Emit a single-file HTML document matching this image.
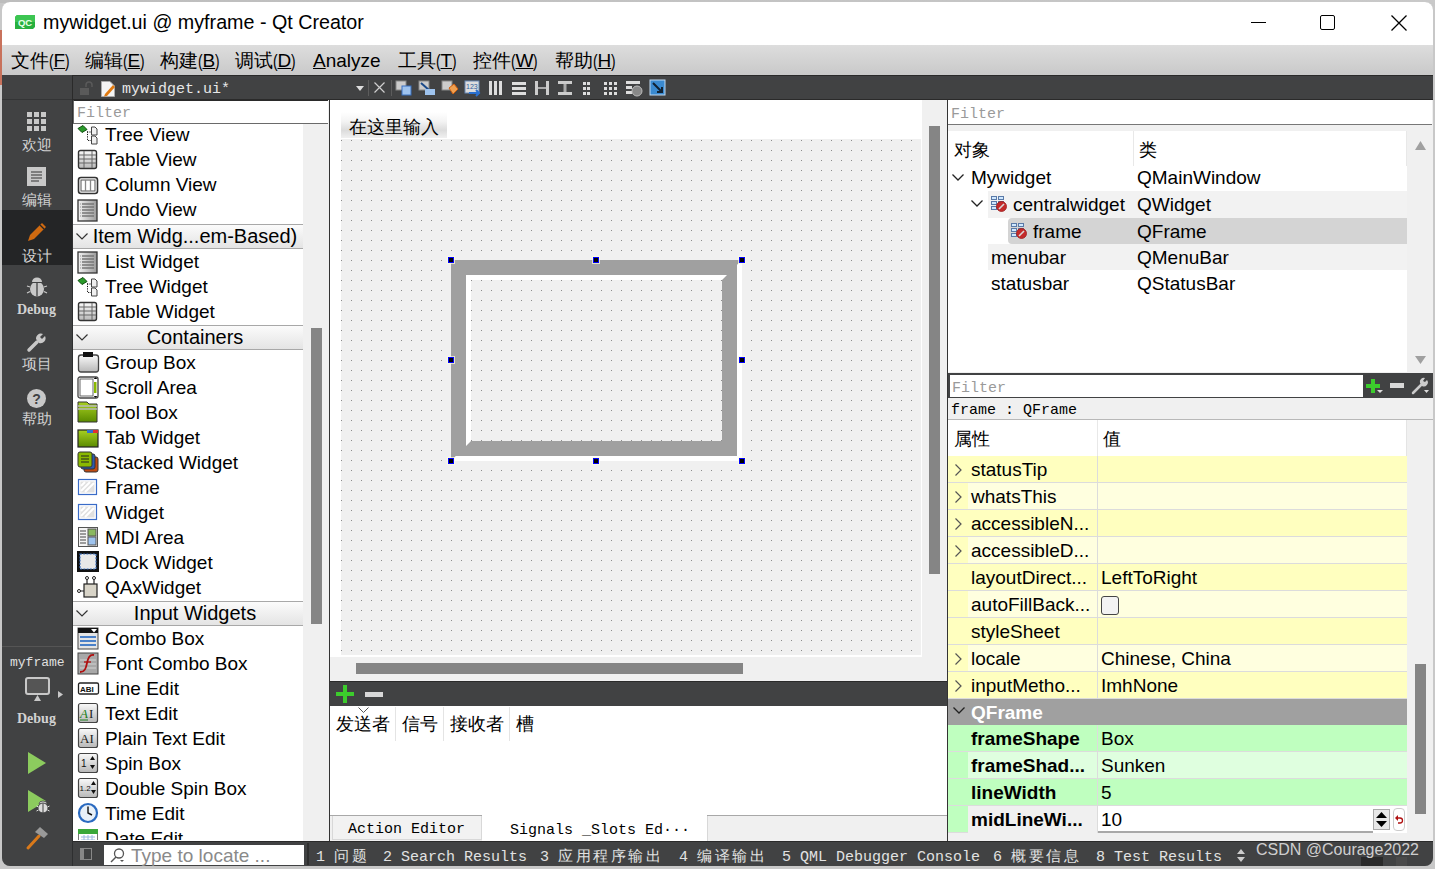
<!DOCTYPE html>
<html><head><meta charset="utf-8">
<style>
*{box-sizing:border-box;margin:0;padding:0}
html,body{width:1435px;height:869px;overflow:hidden;background:#c4c4c4;font-family:"Liberation Sans",sans-serif;color:#000}
.a{position:absolute}
svg.a{overflow:visible}
.t{position:absolute;white-space:nowrap;line-height:1}
.mono{font-family:"Liberation Mono",monospace}
.serif{font-family:"Liberation Serif",serif}
</style></head><body>

<div class="a" style="left:0px;top:0px;width:1435px;height:869px;background:#c8c8c8;"></div>
<div class="a" style="left:0px;top:0px;width:1435px;height:3px;background:linear-gradient(90deg,#bdbdbd,#c9c9c9);"></div>
<div class="a" style="left:0px;top:30px;width:3px;height:55px;background:#c8725c;"></div>
<div class="a" style="left:2px;top:2px;width:1431px;height:864px;background:#414243;border-radius:8px;border:1px solid #a8a8a8"></div>
<div class="a" style="left:2px;top:2px;width:1431px;height:43px;background:#fff;border-radius:8px 8px 0 0"></div>
<svg class="a" style="left:15px;top:15px;" width="20" height="14" viewBox="0 0 20 14"><path d="M2 0 H20 V12 L18 14 H0 V2 Z" fill="#27b03e"/><path d="M2 0 H20 V7 H0 V2 Z" fill="#3cc552"/><text x="10" y="11" font-family="Liberation Sans" font-weight="bold" font-size="9.5" fill="#e8ffe8" text-anchor="middle">QC</text></svg>
<div class="t" style="left:43px;top:13.02px;font-size:19.7px;color:#000;">mywidget.ui @ myframe - Qt Creator</div>
<div class="a" style="left:1251px;top:22px;width:15px;height:1px;background:#000;"></div>
<div class="a" style="left:1320px;top:15px;width:15px;height:15px;border:1.3px solid #000;border-radius:2px"></div>
<svg class="a" style="left:1391px;top:15px;" width="16" height="16" viewBox="0 0 16 16"><path d="M0.5 0.5 L15.5 15.5 M15.5 0.5 L0.5 15.5" stroke="#000" stroke-width="1.3"/></svg>
<div class="a" style="left:2px;top:45px;width:1431px;height:30px;background:linear-gradient(#dddddd,#c9c9c9);"></div>
<div class="t" style="left:11px;top:50.92px;font-size:19px;color:#000;">文件<span style="display:inline-block;transform:scaleX(0.72);transform-origin:left;margin-right:-1.8px">(</span><u>F</u><span style="display:inline-block;transform:scaleX(0.72);transform-origin:left;margin-right:-1.8px">)</span></div>
<div class="t" style="left:85px;top:50.92px;font-size:19px;color:#000;">编辑<span style="display:inline-block;transform:scaleX(0.72);transform-origin:left;margin-right:-1.8px">(</span><u>E</u><span style="display:inline-block;transform:scaleX(0.72);transform-origin:left;margin-right:-1.8px">)</span></div>
<div class="t" style="left:160px;top:50.92px;font-size:19px;color:#000;">构建<span style="display:inline-block;transform:scaleX(0.72);transform-origin:left;margin-right:-1.8px">(</span><u>B</u><span style="display:inline-block;transform:scaleX(0.72);transform-origin:left;margin-right:-1.8px">)</span></div>
<div class="t" style="left:235px;top:50.92px;font-size:19px;color:#000;">调试<span style="display:inline-block;transform:scaleX(0.72);transform-origin:left;margin-right:-1.8px">(</span><u>D</u><span style="display:inline-block;transform:scaleX(0.72);transform-origin:left;margin-right:-1.8px">)</span></div>
<div class="t" style="left:313px;top:50.92px;font-size:19px;color:#000;"><u>A</u>nalyze</div>
<div class="t" style="left:398px;top:50.92px;font-size:19px;color:#000;">工具<span style="display:inline-block;transform:scaleX(0.72);transform-origin:left;margin-right:-1.8px">(</span><u>T</u><span style="display:inline-block;transform:scaleX(0.72);transform-origin:left;margin-right:-1.8px">)</span></div>
<div class="t" style="left:473px;top:50.92px;font-size:19px;color:#000;">控件<span style="display:inline-block;transform:scaleX(0.72);transform-origin:left;margin-right:-1.8px">(</span><u>W</u><span style="display:inline-block;transform:scaleX(0.72);transform-origin:left;margin-right:-1.8px">)</span></div>
<div class="t" style="left:555px;top:50.92px;font-size:19px;color:#000;">帮助<span style="display:inline-block;transform:scaleX(0.72);transform-origin:left;margin-right:-1.8px">(</span><u>H</u><span style="display:inline-block;transform:scaleX(0.72);transform-origin:left;margin-right:-1.8px">)</span></div>
<div class="a" style="left:2px;top:75px;width:1431px;height:25px;background:#414243;"></div>
<div class="a" style="left:2px;top:75px;width:1431px;height:1px;background:#2a2a2a;"></div>
<div class="a" style="left:2px;top:99px;width:1431px;height:1px;background:#2a2a2a;"></div>
<div class="a" style="left:2px;top:75px;width:71px;height:791px;background:#414243;border-radius:0 0 0 8px"></div>
<div class="a" style="left:72px;top:75px;width:1px;height:25px;background:#2a2a2a;"></div>
<div class="a" style="left:2px;top:99px;width:70px;height:1px;background:#333435;"></div>
<svg class="a" style="left:80px;top:82px;" width="12" height="13" viewBox="0 0 12 13"><path d="M6 5 V3 A3 3 0 0 1 12 3 V5" stroke="#5a5a5a" stroke-width="1.5" fill="none"/><rect x="0" y="6" width="9" height="7" fill="#5a5a5a"/></svg>
<svg class="a" style="left:101px;top:81px;" width="15" height="16" viewBox="0 0 15 16"><path d="M0.5 0.5 H9 L13.5 5 V15.5 H0.5 Z" fill="#f4f4f4" stroke="#aaa"/><path d="M4 13 L12 4 L14 6 L6 15 L3 15.5 Z" fill="#e07a10"/></svg>
<div class="t mono" style="left:122px;top:82.03px;font-size:15px;color:#e8e8e8;">mywidget.ui*</div>
<svg class="a" style="left:356px;top:86px;" width="8" height="5" viewBox="0 0 8 5"><path d="M0 0 H8 L4 5 Z" fill="#ddd"/></svg>
<div class="a" style="left:368px;top:80px;width:1px;height:16px;background:#5c5c5c;"></div>
<svg class="a" style="left:374px;top:82px;" width="11" height="11" viewBox="0 0 11 11"><path d="M0.5 0.5 L10.5 10.5 M10.5 0.5 L0.5 10.5" stroke="#cfcfcf" stroke-width="1.2"/></svg>
<div class="a" style="left:391px;top:80px;width:1px;height:16px;background:#5c5c5c;"></div>
<svg class="a" style="left:396px;top:80px;" width="16" height="16" viewBox="0 0 16 16"><rect x="0" y="1" width="10" height="9" fill="#ccc" stroke="#888"/><rect x="6" y="6" width="9" height="9" fill="#9ec3ee" stroke="#3a70c0"/></svg>
<svg class="a" style="left:419px;top:80px;" width="16" height="16" viewBox="0 0 16 16"><rect x="0" y="1" width="10" height="9" fill="#ccc" stroke="#888"/><path d="M2 3 L10 10" stroke="#1a4a8a" stroke-width="2"/><rect x="6" y="9" width="10" height="6" fill="#9ec3ee"/></svg>
<svg class="a" style="left:442px;top:80px;" width="16" height="16" viewBox="0 0 16 16"><rect x="0" y="1" width="10" height="9" fill="#ccc" stroke="#888"/><path d="M7 8 L12 4 L16 9 L11 14 Z" fill="#f0a050" stroke="#d06010"/></svg>
<svg class="a" style="left:465px;top:80px;" width="16" height="16" viewBox="0 0 16 16"><rect x="0" y="1" width="14" height="12" fill="#ddd" stroke="#6a8ab8"/><text x="1" y="9" font-size="7" fill="#3060a0" font-family="Liberation Sans">123</text><path d="M4 13 H14 M11 10 L14 13 L11 16" stroke="#2a70d0" stroke-width="2" fill="none"/></svg>
<svg class="a" style="left:489px;top:80px;" width="16" height="16" viewBox="0 0 16 16"><rect x="0" y="1" width="3" height="14" fill="#ddd"/><rect x="5" y="1" width="3" height="14" fill="#ddd"/><rect x="10" y="1" width="3" height="14" fill="#ddd"/></svg>
<svg class="a" style="left:512px;top:80px;" width="16" height="16" viewBox="0 0 16 16"><rect x="0" y="2" width="14" height="3" fill="#ddd"/><rect x="0" y="7" width="14" height="3" fill="#ddd"/><rect x="0" y="12" width="14" height="3" fill="#ddd"/></svg>
<svg class="a" style="left:535px;top:80px;" width="16" height="16" viewBox="0 0 16 16"><rect x="0" y="1" width="3" height="14" fill="#ccc"/><rect x="11" y="1" width="3" height="14" fill="#ccc"/><path d="M3 8 H11" stroke="#aaa" stroke-width="2"/></svg>
<svg class="a" style="left:558px;top:80px;" width="16" height="16" viewBox="0 0 16 16"><rect x="0" y="1" width="14" height="3" fill="#ccc"/><rect x="0" y="12" width="14" height="3" fill="#ccc"/><path d="M7 4 V12" stroke="#aaa" stroke-width="3"/></svg>
<svg class="a" style="left:583px;top:80px;" width="16" height="16" viewBox="0 0 16 16"><rect x="0" y="2" width="3" height="3" fill="#ddd"/><rect x="4" y="2" width="3" height="3" fill="#ddd"/><rect x="0" y="7" width="3" height="3" fill="#ddd"/><rect x="4" y="7" width="3" height="3" fill="#ddd"/><rect x="0" y="12" width="3" height="3" fill="#ddd"/><rect x="4" y="12" width="3" height="3" fill="#ddd"/></svg>
<svg class="a" style="left:604px;top:80px;" width="16" height="16" viewBox="0 0 16 16"><rect x="0" y="2" width="3" height="3" fill="#ddd"/><rect x="0" y="7" width="3" height="3" fill="#ddd"/><rect x="0" y="12" width="3" height="3" fill="#ddd"/><rect x="5" y="2" width="3" height="3" fill="#ddd"/><rect x="5" y="7" width="3" height="3" fill="#ddd"/><rect x="5" y="12" width="3" height="3" fill="#ddd"/><rect x="10" y="2" width="3" height="3" fill="#ddd"/><rect x="10" y="7" width="3" height="3" fill="#ddd"/><rect x="10" y="12" width="3" height="3" fill="#ddd"/></svg>
<svg class="a" style="left:626px;top:80px;" width="16" height="16" viewBox="0 0 16 16"><rect x="0" y="1" width="14" height="3" fill="#ddd"/><rect x="0" y="6" width="6" height="3" fill="#ddd"/><rect x="0" y="11" width="6" height="3" fill="#ddd"/><circle cx="11" cy="11" r="5" fill="#888" stroke="#bbb"/></svg>
<svg class="a" style="left:650px;top:80px;" width="16" height="16" viewBox="0 0 16 16"><rect x="0" y="0" width="15" height="15" fill="#3a8ad0" stroke="#c0d8f0"/><path d="M3 3 L12 12 M12 7 V12 H7" stroke="#123" stroke-width="2" fill="none"/></svg>
<svg class="a" style="left:27px;top:112px;" width="19" height="19" viewBox="0 0 19 19"><rect x="0" y="0" width="5" height="5" fill="#c8c8c8"/><rect x="0" y="7" width="5" height="5" fill="#c8c8c8"/><rect x="0" y="14" width="5" height="5" fill="#c8c8c8"/><rect x="7" y="0" width="5" height="5" fill="#c8c8c8"/><rect x="7" y="7" width="5" height="5" fill="#c8c8c8"/><rect x="7" y="14" width="5" height="5" fill="#c8c8c8"/><rect x="14" y="0" width="5" height="5" fill="#c8c8c8"/><rect x="14" y="7" width="5" height="5" fill="#c8c8c8"/><rect x="14" y="14" width="5" height="5" fill="#c8c8c8"/></svg>
<div class="t" style="left:22px;top:137.30px;font-size:15px;color:#d2d2d2;font-weight:500;">欢迎</div>
<svg class="a" style="left:27px;top:167px;" width="19" height="19" viewBox="0 0 19 19"><rect x="0" y="0" width="19" height="19" fill="#c8c8c8"/><path d="M4 5 H15 M4 8 H15 M4 11 H15 M4 14 H12" stroke="#333" stroke-width="1.2"/></svg>
<div class="t" style="left:22px;top:192.30px;font-size:15px;color:#d2d2d2;font-weight:500;">编辑</div>
<div class="a" style="left:2px;top:210px;width:70px;height:55px;background:#242526;"></div>
<svg class="a" style="left:27px;top:222px;" width="20" height="20" viewBox="0 0 20 20"><path d="M1 19 L3 13 L15 1 L19 5 L7 17 Z" fill="#d06a10"/><path d="M13 3 L17 7" stroke="#242526" stroke-width="1.2"/></svg>
<div class="t" style="left:22px;top:248.30px;font-size:15px;color:#d2d2d2;font-weight:500;">设计</div>
<svg class="a" style="left:27px;top:277px;" width="20" height="20" viewBox="0 0 20 20"><path d="M5 5 A5 4.5 0 0 1 15 5 Z" fill="#c8c8c8"/><ellipse cx="10" cy="12" rx="7" ry="7.5" fill="#c8c8c8"/><path d="M10 5 V19.5" stroke="#414243" stroke-width="1.3"/><path d="M4.5 5.5 H15.5" stroke="#414243" stroke-width="1"/><path d="M0 9 L3 10 M20 9 L17 10 M0 16 L3 14.5 M20 16 L17 14.5" stroke="#c8c8c8" stroke-width="1.3"/></svg>
<div class="t serif" style="left:17px;top:303.27px;font-size:14px;color:#d2d2d2;"><b>Debug</b></div>
<svg class="a" style="left:27px;top:333px;" width="19" height="19" viewBox="0 0 19 19"><path d="M2 17 L10 9" stroke="#c8c8c8" stroke-width="3.5" stroke-linecap="round"/><path d="M9 6 A5 5 0 0 1 16 1 L13 4 L15 6 L18 3 A5 5 0 0 1 12 10 Z" fill="#c8c8c8"/></svg>
<div class="t" style="left:22px;top:356.30px;font-size:15px;color:#d2d2d2;font-weight:500;">项目</div>
<svg class="a" style="left:27px;top:389px;" width="19" height="19" viewBox="0 0 19 19"><circle cx="9.5" cy="9.5" r="9.5" fill="#c8c8c8"/><text x="9.5" y="15" font-family="Liberation Sans" font-weight="bold" font-size="14" fill="#414243" text-anchor="middle">?</text></svg>
<div class="t" style="left:22px;top:411.30px;font-size:15px;color:#d2d2d2;font-weight:500;">帮助</div>
<div class="a" style="left:2px;top:646px;width:70px;height:1px;background:#555;"></div>
<div class="t mono" style="left:10px;top:656.05px;font-size:13px;color:#e0e0e0;">myframe</div>
<svg class="a" style="left:25px;top:677px;" width="25" height="24" viewBox="0 0 25 24"><rect x="1" y="1" width="23" height="16" rx="2" fill="#555" stroke="#c8c8c8" stroke-width="2"/><path d="M9 24 L12.5 18 L16 24 Z" fill="#c8c8c8"/></svg>
<svg class="a" style="left:58px;top:691px;" width="5" height="7" viewBox="0 0 5 7"><path d="M0 0 L5 3.5 L0 7 Z" fill="#c8c8c8"/></svg>
<div class="t serif" style="left:17px;top:712.27px;font-size:14px;color:#d2d2d2;"><b>Debug</b></div>
<svg class="a" style="left:28px;top:752px;" width="18" height="22" viewBox="0 0 18 22"><path d="M0 0 L18 11 L0 22 Z" fill="#8ccb5e"/></svg>
<svg class="a" style="left:28px;top:790px;" width="22" height="24" viewBox="0 0 22 24"><path d="M0 0 L18 11 L0 22 Z" fill="#8ccb5e"/><path d="M11 14 A4 3 0 0 1 19 14 Z" fill="#ddd" stroke="#414243" stroke-width="0.8"/><ellipse cx="15" cy="18" rx="5" ry="5" fill="#ddd" stroke="#414243" stroke-width="1"/><path d="M15 13.5 V23" stroke="#414243"/><path d="M8.5 16 L10.5 17 M21.5 16 L19.5 17 M8.5 21 L10.5 20 M21.5 21 L19.5 20" stroke="#ddd"/></svg>
<svg class="a" style="left:25px;top:827px;" width="24" height="22" viewBox="0 0 24 22"><path d="M3 21 L14 9" stroke="#d9791a" stroke-width="3" stroke-linecap="round"/><path d="M10 5 L15 0 L23 7 L19 11 Z" fill="#999"/></svg>
<div class="a" style="left:73px;top:100px;width:256px;height:741px;background:#fff;"></div>
<div class="a" style="left:73px;top:100px;width:256px;height:24px;background:#fff;border:1px solid #6a6a6a;border-top-color:#2a2a2a"></div>
<div class="t mono" style="left:77px;top:106.03px;font-size:15px;color:#9a9a9a;">Filter</div>
<div class="a" style="left:303px;top:124px;width:26px;height:717px;background:#f0f0f0;"></div>
<div class="a" style="left:311px;top:328px;width:11px;height:296px;background:#858585;"></div>
<div class="a" style="left:328px;top:100px;width:1px;height:741px;background:#f0f0f0;"></div>
<svg width="0" height="0" style="position:absolute"><defs><linearGradient id="gg" x1="0" y1="0" x2="0" y2="1"><stop offset="0" stop-color="#fafafa"/><stop offset="1" stop-color="#b8b8b8"/></linearGradient><linearGradient id="gr" x1="0" y1="0" x2="1" y2="0"><stop offset="0" stop-color="#f4f4f4"/><stop offset="1" stop-color="#9a9a9a"/></linearGradient><linearGradient id="gn" x1="0" y1="0" x2="0" y2="1"><stop offset="0" stop-color="#a8d020"/><stop offset="1" stop-color="#5a8a00"/></linearGradient></defs></svg>
<div class="a" style="left:73px;top:124px;width:230px;height:716px;overflow:hidden">
<svg class="a" style="left:4px;top:-0.5px" width="22" height="22" viewBox="0 0 22 22"><g transform="translate(0,1.5)"><path d="M1 3 L6 0 L10 4 L5 7 Z" fill="#2a9a2a" stroke="#0d4d0d"/><path d="M10 6.5 H14 M10.5 6 V15 H14" stroke="#111" stroke-dasharray="1.2 1.2" fill="none"/><path d="M14.5 1.5 H18 L20 3.5 V9.5 H14.5 Z" fill="#f0f0f0" stroke="#444"/><path d="M14.5 10.5 H18 L20 12.5 V18.5 H14.5 Z" fill="#f0f0f0" stroke="#444"/></g></svg>
<div class="t" style="left:32px;top:1.42px;font-size:19px">Tree View</div>
<svg class="a" style="left:4px;top:24.5px" width="22" height="22" viewBox="0 0 22 22"><rect x="1.5" y="1.5" width="18" height="18" rx="2" fill="url(#gg)" stroke="#333" stroke-width="1.4"/><path d="M2 6 H19 M2 10 H19 M2 14 H19 M7 2 V19 M15 2 V19" stroke="#666" stroke-width="1"/></svg>
<div class="t" style="left:32px;top:26.42px;font-size:19px">Table View</div>
<svg class="a" style="left:4px;top:49.5px" width="22" height="22" viewBox="0 0 22 22"><rect x="1.5" y="3.5" width="19" height="16" rx="2.5" fill="#fff" stroke="#333" stroke-width="1.6"/><rect x="4" y="6" width="14" height="11" fill="#fff" stroke="#555"/><path d="M8.5 6 V17 M13.5 6 V17" stroke="#888" stroke-width="1.3"/></svg>
<div class="t" style="left:32px;top:51.42px;font-size:19px">Column View</div>
<svg class="a" style="left:4px;top:74.5px" width="22" height="22" viewBox="0 0 22 22"><rect x="1" y="1" width="19" height="21" fill="url(#gr)" stroke="#333" stroke-width="1.3"/><path d="M5 5 H17 M5 8 H17 M5 11 H17 M5 14 H17 M5 17 H17" stroke="#777" stroke-width="1.4"/><path d="M3 5 H4 M3 8 H4 M3 11 H4 M3 14 H4 M3 17 H4" stroke="#999"/></svg>
<div class="t" style="left:32px;top:76.42px;font-size:19px">Undo View</div>
<div class="a" style="left:0;top:100px;width:230px;height:25px;background:linear-gradient(#fbfbfb,#e4e4e4);border-top:1px solid #a8a8a8;border-bottom:1px solid #a8a8a8"></div>
<svg class="a" style="left:3px;top:109px" width="12" height="7"><path d="M0.5 0.5 L6 6 L11.5 0.5" stroke="#333" stroke-width="1.2" fill="none"/></svg>
<div class="t" style="left:14px;width:216px;text-align:center;top:102.07px;font-size:20px">Item Widg...em-Based)</div>
<svg class="a" style="left:4px;top:126.5px" width="22" height="22" viewBox="0 0 22 22"><rect x="1" y="1" width="19" height="21" fill="url(#gr)" stroke="#333" stroke-width="1.3"/><path d="M5 5 H17 M5 8 H17 M5 11 H17 M5 14 H17 M5 17 H17" stroke="#777" stroke-width="1.4"/><path d="M3 5 H4 M3 8 H4 M3 11 H4 M3 14 H4 M3 17 H4" stroke="#999"/></svg>
<div class="t" style="left:32px;top:128.42px;font-size:19px">List Widget</div>
<svg class="a" style="left:4px;top:151.5px" width="22" height="22" viewBox="0 0 22 22"><g transform="translate(0,1.5)"><path d="M1 3 L6 0 L10 4 L5 7 Z" fill="#2a9a2a" stroke="#0d4d0d"/><path d="M10 6.5 H14 M10.5 6 V15 H14" stroke="#111" stroke-dasharray="1.2 1.2" fill="none"/><path d="M14.5 1.5 H18 L20 3.5 V9.5 H14.5 Z" fill="#f0f0f0" stroke="#444"/><path d="M14.5 10.5 H18 L20 12.5 V18.5 H14.5 Z" fill="#f0f0f0" stroke="#444"/></g></svg>
<div class="t" style="left:32px;top:153.42px;font-size:19px">Tree Widget</div>
<svg class="a" style="left:4px;top:176.5px" width="22" height="22" viewBox="0 0 22 22"><rect x="1.5" y="1.5" width="18" height="18" rx="2" fill="url(#gg)" stroke="#333" stroke-width="1.4"/><path d="M2 6 H19 M2 10 H19 M2 14 H19 M7 2 V19 M15 2 V19" stroke="#666" stroke-width="1"/></svg>
<div class="t" style="left:32px;top:178.42px;font-size:19px">Table Widget</div>
<div class="a" style="left:0;top:201px;width:230px;height:25px;background:linear-gradient(#fbfbfb,#e4e4e4);border-top:1px solid #a8a8a8;border-bottom:1px solid #a8a8a8"></div>
<svg class="a" style="left:3px;top:210px" width="12" height="7"><path d="M0.5 0.5 L6 6 L11.5 0.5" stroke="#333" stroke-width="1.2" fill="none"/></svg>
<div class="t" style="left:14px;width:216px;text-align:center;top:203.07px;font-size:20px">Containers</div>
<svg class="a" style="left:4px;top:227.4px" width="22" height="22" viewBox="0 0 22 22"><rect x="1.5" y="4" width="20" height="17" rx="2.5" fill="url(#gg)" stroke="#444" stroke-width="1.3"/><rect x="6" y="1" width="10" height="5" fill="#111"/></svg>
<div class="t" style="left:32px;top:229.32px;font-size:19px">Group Box</div>
<svg class="a" style="left:4px;top:252.4px" width="22" height="22" viewBox="0 0 22 22"><rect x="1" y="1" width="20" height="21" rx="2" fill="#fff" stroke="#444" stroke-width="1.3"/><rect x="3" y="3" width="13" height="17" fill="#fff" stroke="#666"/><rect x="17" y="6" width="2.5" height="11" fill="#8ab800"/><path d="M17 3 L18.5 1.5 L20 3 M17 20 L18.5 21.5 L20 20" stroke="#333"/></svg>
<div class="t" style="left:32px;top:254.32px;font-size:19px">Scroll Area</div>
<svg class="a" style="left:4px;top:277.4px" width="22" height="22" viewBox="0 0 22 22"><path d="M1 1 H10 L12 3 H20 V21 H1 Z" fill="url(#gn)" stroke="#333"/><path d="M1 5 H20 M1 8 H20" stroke="#bbb" stroke-width="1.5"/></svg>
<div class="t" style="left:32px;top:279.32px;font-size:19px">Tool Box</div>
<svg class="a" style="left:4px;top:302.4px" width="22" height="22" viewBox="0 0 22 22"><rect x="1" y="4" width="20" height="17" fill="url(#gn)" stroke="#222" stroke-width="1.2"/><rect x="10" y="4" width="6" height="3" fill="#3070d0"/><rect x="16" y="4" width="5" height="3" fill="#e03030"/></svg>
<div class="t" style="left:32px;top:304.32px;font-size:19px">Tab Widget</div>
<svg class="a" style="left:4px;top:327.4px" width="22" height="22" viewBox="0 0 22 22"><rect x="7" y="6" width="14" height="15" rx="2" fill="#c04a10" stroke="#333"/><rect x="4" y="3" width="14" height="15" rx="2" fill="#2a5ab0" stroke="#333"/><rect x="1" y="1" width="14" height="15" rx="2" fill="#8ab800" stroke="#333"/><path d="M4 5 H12 M4 8 H12 M4 11 H12" stroke="#222"/></svg>
<div class="t" style="left:32px;top:329.32px;font-size:19px">Stacked Widget</div>
<svg class="a" style="left:4px;top:352.4px" width="22" height="22" viewBox="0 0 22 22"><rect x="1.5" y="3.5" width="18" height="15" fill="#fff" stroke="#3a6cc8" stroke-width="1.2"/><rect x="3.5" y="5.5" width="14" height="11" fill="#e0e0e0"/><path d="M4 15 L13 6 M8 16 L17 7 M4 10 L8 6" stroke="#fff" stroke-width="2"/></svg>
<div class="t" style="left:32px;top:354.32px;font-size:19px">Frame</div>
<svg class="a" style="left:4px;top:377.4px" width="22" height="22" viewBox="0 0 22 22"><rect x="1.5" y="3.5" width="18" height="15" fill="#fff" stroke="#3a6cc8" stroke-width="1.2"/><rect x="3.5" y="5.5" width="14" height="11" fill="#e0e0e0"/><path d="M4 15 L13 6 M8 16 L17 7 M4 10 L8 6" stroke="#fff" stroke-width="2"/></svg>
<div class="t" style="left:32px;top:379.32px;font-size:19px">Widget</div>
<svg class="a" style="left:4px;top:402.4px" width="22" height="22" viewBox="0 0 22 22"><rect x="1.5" y="1.5" width="19" height="19" fill="#f4f4f4" stroke="#555"/><rect x="11" y="3" width="8" height="7" fill="#8ab860" stroke="#555"/><rect x="11" y="11" width="8" height="8" fill="#9ec3ee" stroke="#555"/><path d="M3 5 H9 M3 8 H9 M3 11 H9 M3 14 H9 M3 17 H9" stroke="#444"/></svg>
<div class="t" style="left:32px;top:404.32px;font-size:19px">MDI Area</div>
<svg class="a" style="left:4px;top:427.4px" width="22" height="22" viewBox="0 0 22 22"><rect x="0" y="0" width="22" height="21" fill="#111"/><rect x="3" y="3" width="16" height="15" fill="#e8e8e8" stroke="#3a70c0" stroke-width="1.2" stroke-dasharray="2 1.2"/></svg>
<div class="t" style="left:32px;top:429.32px;font-size:19px">Dock Widget</div>
<svg class="a" style="left:4px;top:452.4px" width="22" height="22" viewBox="0 0 22 22"><rect x="7" y="8" width="13" height="13" fill="#d8d4c8" stroke="#222" stroke-width="1.2"/><path d="M10 8 V3 M17 8 V3 M1 15 H7" stroke="#222" stroke-width="1.2"/><circle cx="10" cy="2" r="1.5" fill="#fff" stroke="#222"/><circle cx="17" cy="2" r="1.5" fill="#fff" stroke="#222"/><circle cx="2" cy="15" r="1.5" fill="#fff" stroke="#222"/></svg>
<div class="t" style="left:32px;top:454.32px;font-size:19px">QAxWidget</div>
<div class="a" style="left:0;top:477px;width:230px;height:25px;background:linear-gradient(#fbfbfb,#e4e4e4);border-top:1px solid #a8a8a8;border-bottom:1px solid #a8a8a8"></div>
<svg class="a" style="left:3px;top:486px" width="12" height="7"><path d="M0.5 0.5 L6 6 L11.5 0.5" stroke="#333" stroke-width="1.2" fill="none"/></svg>
<div class="t" style="left:14px;width:216px;text-align:center;top:479.07px;font-size:20px">Input Widgets</div>
<svg class="a" style="left:4px;top:503.3px" width="22" height="22" viewBox="0 0 22 22"><rect x="1" y="1" width="20" height="21" fill="#e4e4e4" stroke="#444"/><rect x="1" y="1" width="20" height="5" fill="#111"/><path d="M14 2 H20 L17 5.5 Z" fill="#fff"/><path d="M3 10 H19 M3 14 H19 M3 18 H19" stroke="#4a80c8" stroke-width="2.2"/></svg>
<div class="t" style="left:32px;top:505.22px;font-size:19px">Combo Box</div>
<svg class="a" style="left:4px;top:528.3px" width="22" height="22" viewBox="0 0 22 22"><rect x="1" y="1" width="20" height="21" fill="#a8a8a8" stroke="#444"/><path d="M3 8 H19 M3 12 H19 M3 16 H19" stroke="#bdbdbd" stroke-width="2"/><path d="M17 3 C12 2 11 7 10 11 C9 16 8 20 3 20" stroke="#b01010" stroke-width="1.8" fill="none"/><path d="M7 10 H14" stroke="#b01010" stroke-width="1.3"/></svg>
<div class="t" style="left:32px;top:530.22px;font-size:19px">Font Combo Box</div>
<svg class="a" style="left:4px;top:553.3px" width="22" height="22" viewBox="0 0 22 22"><rect x="1.5" y="6" width="20" height="11" rx="1.5" fill="#fff" stroke="#222" stroke-width="1.3"/><text x="3" y="15" font-size="8" font-family="Liberation Sans" font-weight="bold" fill="#111">ABI</text></svg>
<div class="t" style="left:32px;top:555.22px;font-size:19px">Line Edit</div>
<svg class="a" style="left:4px;top:578.3px" width="22" height="22" viewBox="0 0 22 22"><rect x="1.5" y="1.5" width="19" height="19" rx="2" fill="url(#gg)" stroke="#444" stroke-width="1.2"/><text x="3" y="16" font-size="13" font-family="Liberation Serif" font-style="italic" fill="#208020">A</text><path d="M3 18 H11" stroke="#208020"/><text x="12" y="16" font-size="13" font-family="Liberation Serif" fill="#222">I</text></svg>
<div class="t" style="left:32px;top:580.22px;font-size:19px">Text Edit</div>
<svg class="a" style="left:4px;top:603.3px" width="22" height="22" viewBox="0 0 22 22"><rect x="1.5" y="1.5" width="19" height="19" rx="2" fill="url(#gg)" stroke="#444" stroke-width="1.2"/><text x="3" y="16" font-size="13" font-family="Liberation Serif" fill="#222">AI</text></svg>
<div class="t" style="left:32px;top:605.22px;font-size:19px">Plain Text Edit</div>
<svg class="a" style="left:4px;top:628.3px" width="22" height="22" viewBox="0 0 22 22"><rect x="1.5" y="1.5" width="19" height="19" rx="2" fill="url(#gg)" stroke="#444" stroke-width="1.2"/><text x="4" y="15" font-size="10" font-family="Liberation Sans" fill="#111">1</text><path d="M13 8 L15.5 4 L18 8 Z M13 13 L15.5 17 L18 13 Z" fill="#111"/></svg>
<div class="t" style="left:32px;top:630.22px;font-size:19px">Spin Box</div>
<svg class="a" style="left:4px;top:653.3px" width="22" height="22" viewBox="0 0 22 22"><rect x="1.5" y="1.5" width="19" height="19" rx="2" fill="url(#gg)" stroke="#444" stroke-width="1.2"/><text x="2.5" y="14" font-size="8" font-family="Liberation Sans" fill="#111">1.2</text><path d="M14 8 L16.5 4 L19 8 Z M14 13 L16.5 17 L19 13 Z" fill="#111"/></svg>
<div class="t" style="left:32px;top:655.22px;font-size:19px">Double Spin Box</div>
<svg class="a" style="left:4px;top:678.3px" width="22" height="22" viewBox="0 0 22 22"><circle cx="11" cy="11" r="9" fill="#e8f0f8" stroke="#2a6ac0" stroke-width="2.2"/><path d="M11 4.5 V11 L15 13" stroke="#111" stroke-width="1.4" fill="none"/></svg>
<div class="t" style="left:32px;top:680.22px;font-size:19px">Time Edit</div>
<svg class="a" style="left:4px;top:703.3px" width="22" height="22" viewBox="0 0 22 22"><rect x="1.5" y="3.5" width="19" height="18" fill="#fff" stroke="#777"/><rect x="1" y="2" width="20" height="5" fill="#3aa83a"/><path d="M4 10 H18 M4 13 H18 M4 16 H18 M7 8 V20 M11 8 V20 M15 8 V20" stroke="#9ab8e0"/></svg>
<div class="t" style="left:32px;top:705.22px;font-size:19px">Date Edit</div>
</div>
<div class="a" style="left:329px;top:100px;width:1px;height:741px;background:#333;"></div>
<div class="a" style="left:330px;top:100px;width:617px;height:581px;background:#fff;"></div>
<div class="a" style="left:922px;top:100px;width:25px;height:581px;background:#f0f0f0;"></div>
<div class="a" style="left:330px;top:657px;width:617px;height:24px;background:#f0f0f0;"></div>
<div class="a" style="left:929px;top:126px;width:11px;height:448px;background:#858585;"></div>
<div class="a" style="left:356px;top:663px;width:387px;height:11px;background:#858585;"></div>
<div class="a" style="left:341px;top:112px;width:106px;height:26px;background:linear-gradient(#ffffff 0%,#f4f4f4 35%,#dcdcdc 70%,#f0f0f0 100%);"></div>
<div class="t" style="left:349px;top:117.76px;font-size:18px;color:#000;">在这里输入</div>
<div class="a" style="left:341px;top:139px;width:580px;height:516px;background-color:#f0f0f0;background-image:radial-gradient(circle at 0.5px 1.5px,#8c8c8c 0.8px,transparent 0.9px);background-size:10px 10px"></div>
<div class="a" style="left:921px;top:139px;width:1px;height:517px;background:#fff;"></div>
<div class="a" style="left:341px;top:655px;width:581px;height:1px;background:#fff;"></div>
<svg class="a" style="left:451px;top:260px;" width="291" height="201" viewBox="0 0 291 201"><path d="M0 0 H291 L286 5 H5 V196 L0 201 Z" fill="#a0a0a0"/><path d="M291 0 V201 H0 L5 196 H286 V5 Z" fill="#fff"/><rect x="5" y="5" width="281" height="191" fill="#a0a0a0"/><path d="M15 15 H276 L271 20 H20 V181 L15 186 Z" fill="#fff"/></svg>
<div class="a" style="left:471px;top:280px;width:251px;height:161px;background-color:#f0f0f0;background-image:radial-gradient(circle at 0.5px 0.5px,#8c8c8c 0.8px,transparent 0.9px);background-size:10px 10px;background-position:0px 0px"></div>
<div class="a" style="left:448px;top:257px;width:6px;height:6px;background:#000;border:1px solid #0000ff;box-shadow:0 0 0 1px rgba(255,255,220,0.7)"></div>
<div class="a" style="left:593px;top:257px;width:6px;height:6px;background:#000;border:1px solid #0000ff;box-shadow:0 0 0 1px rgba(255,255,220,0.7)"></div>
<div class="a" style="left:739px;top:257px;width:6px;height:6px;background:#000;border:1px solid #0000ff;box-shadow:0 0 0 1px rgba(255,255,220,0.7)"></div>
<div class="a" style="left:448px;top:357px;width:6px;height:6px;background:#000;border:1px solid #0000ff;box-shadow:0 0 0 1px rgba(255,255,220,0.7)"></div>
<div class="a" style="left:739px;top:357px;width:6px;height:6px;background:#000;border:1px solid #0000ff;box-shadow:0 0 0 1px rgba(255,255,220,0.7)"></div>
<div class="a" style="left:448px;top:458px;width:6px;height:6px;background:#000;border:1px solid #0000ff;box-shadow:0 0 0 1px rgba(255,255,220,0.7)"></div>
<div class="a" style="left:593px;top:458px;width:6px;height:6px;background:#000;border:1px solid #0000ff;box-shadow:0 0 0 1px rgba(255,255,220,0.7)"></div>
<div class="a" style="left:739px;top:458px;width:6px;height:6px;background:#000;border:1px solid #0000ff;box-shadow:0 0 0 1px rgba(255,255,220,0.7)"></div>
<div class="a" style="left:330px;top:681px;width:617px;height:25px;background:#414243;"></div>
<div class="a" style="left:330px;top:681px;width:617px;height:1px;background:#2a2a2a;"></div>
<svg class="a" style="left:336px;top:685px;" width="18" height="18" viewBox="0 0 18 18"><path d="M7 0 H11 V7 H18 V11 H11 V18 H7 V11 H0 V7 H7 Z" fill="#3ccc2c"/></svg>
<div class="a" style="left:365px;top:692px;width:18px;height:5px;background:#d8d8d8;"></div>
<div class="a" style="left:330px;top:706px;width:617px;height:109px;background:#fff;"></div>
<div class="a" style="left:395px;top:707px;width:1px;height:34px;background:#e4e4e4;"></div>
<div class="a" style="left:443px;top:707px;width:1px;height:34px;background:#e4e4e4;"></div>
<div class="a" style="left:509px;top:707px;width:1px;height:34px;background:#e4e4e4;"></div>
<svg class="a" style="left:358px;top:707px;" width="11" height="6" viewBox="0 0 11 6"><path d="M0.5 0.5 L5.5 5.5 L10.5 0.5" stroke="#555" fill="none"/></svg>
<div class="t" style="left:336px;top:714.76px;font-size:18px;color:#000;">发送者</div>
<div class="t" style="left:402px;top:714.76px;font-size:18px;color:#000;">信号</div>
<div class="t" style="left:450px;top:714.76px;font-size:18px;color:#000;">接收者</div>
<div class="t" style="left:516px;top:714.76px;font-size:18px;color:#000;">槽</div>
<div class="a" style="left:330px;top:815px;width:617px;height:26px;background:#f0f0f0;"></div>
<div class="a" style="left:330px;top:815px;width:617px;height:1px;background:#a8a8a8;"></div>
<div class="a" style="left:332px;top:816px;width:150px;height:24px;background:#f2f2f2;border:1px solid #d8d8d8;border-top:none"></div>
<div class="a" style="left:482px;top:815px;width:225px;height:26px;background:#fff;"></div>
<div class="a" style="left:707px;top:816px;width:1px;height:25px;background:#d8d8d8;"></div>
<div class="t mono" style="left:348px;top:821.52px;font-size:15px;color:#000;">Action Editor</div>
<div class="t mono" style="left:510px;top:822.52px;font-size:15px;color:#000;">Signals _Slots Ed···</div>
<div class="a" style="left:947px;top:100px;width:1px;height:741px;background:#333;"></div>
<div class="a" style="left:948px;top:100px;width:485px;height:741px;background:#f0f0f0;"></div>
<div class="a" style="left:948px;top:100px;width:484px;height:24px;background:#fff;"></div>
<div class="a" style="left:948px;top:124px;width:484px;height:1px;background:#777;"></div>
<div class="t mono" style="left:951px;top:106.53px;font-size:15px;color:#9a9a9a;">Filter</div>
<div class="a" style="left:948px;top:131px;width:459px;height:241px;background:#fff;"></div>
<div class="a" style="left:948px;top:131px;width:459px;height:35px;background:#fff;"></div>
<div class="a" style="left:1133px;top:131px;width:1px;height:35px;background:#e8e8e8;"></div>
<div class="a" style="left:1406px;top:131px;width:1px;height:35px;background:#e8e8e8;"></div>
<div class="t" style="left:954px;top:140.76px;font-size:18px;color:#000;">对象</div>
<div class="t" style="left:1139px;top:140.76px;font-size:18px;color:#000;">类</div>
<svg class="a" style="left:1415px;top:141px;" width="11" height="9" viewBox="0 0 11 9"><path d="M5.5 0 L11 9 H0 Z" fill="#a0a0a0"/></svg>
<svg class="a" style="left:1415px;top:356px;" width="11" height="8" viewBox="0 0 11 8"><path d="M0 0 H11 L5.5 8 Z" fill="#a0a0a0"/></svg>
<div class="a" style="left:988px;top:191px;width:419px;height:27px;background:#f2f2f2;"></div>
<div class="a" style="left:1008px;top:218px;width:399px;height:26px;background:#d4d4d4;border-radius:4px 0 0 4px"></div>
<div class="a" style="left:988px;top:244px;width:419px;height:26px;background:#f2f2f2;"></div>
<svg class="a" style="left:952px;top:174px;" width="12" height="7" viewBox="0 0 12 7"><path d="M0.5 0.5 L6 6 L11.5 0.5" stroke="#222" stroke-width="1.3" fill="none"/></svg>
<svg class="a" style="left:971px;top:200px;" width="12" height="7" viewBox="0 0 12 7"><path d="M0.5 0.5 L6 6 L11.5 0.5" stroke="#222" stroke-width="1.3" fill="none"/></svg>
<svg class="a" style="left:991px;top:196px;" width="16" height="16" viewBox="0 0 16 16"><g fill="#5a7aa8"><rect x="0" y="0" width="6" height="4"/><rect x="7" y="0" width="6" height="4"/><rect x="0" y="5" width="6" height="4"/><rect x="7" y="5" width="6" height="4"/><rect x="0" y="10" width="6" height="4"/></g><g fill="#cfe8ff"><rect x="1" y="1" width="4" height="2"/><rect x="8" y="1" width="4" height="2"/><rect x="1" y="6" width="4" height="2"/><rect x="1" y="11" width="4" height="2"/></g><circle cx="10.5" cy="10.5" r="5" fill="#c42a2a" stroke="#9a1a1a" stroke-width="0.8"/><path d="M8 13 L13 8" stroke="#d8d8d8" stroke-width="1.6"/></svg>
<svg class="a" style="left:1011px;top:223px;" width="16" height="16" viewBox="0 0 16 16"><g fill="#5a7aa8"><rect x="0" y="0" width="6" height="4"/><rect x="7" y="0" width="6" height="4"/><rect x="0" y="5" width="6" height="4"/><rect x="7" y="5" width="6" height="4"/><rect x="0" y="10" width="6" height="4"/></g><g fill="#cfe8ff"><rect x="1" y="1" width="4" height="2"/><rect x="8" y="1" width="4" height="2"/><rect x="1" y="6" width="4" height="2"/><rect x="1" y="11" width="4" height="2"/></g><circle cx="10.5" cy="10.5" r="5" fill="#c42a2a" stroke="#9a1a1a" stroke-width="0.8"/><path d="M8 13 L13 8" stroke="#d8d8d8" stroke-width="1.6"/></svg>
<div class="t" style="left:971px;top:168.42px;font-size:19px;color:#000;">Mywidget</div>
<div class="t" style="left:1137px;top:168.42px;font-size:19px;color:#000;">QMainWindow</div>
<div class="t" style="left:1013px;top:194.92px;font-size:19px;color:#000;">centralwidget</div>
<div class="t" style="left:1137px;top:194.92px;font-size:19px;color:#000;">QWidget</div>
<div class="t" style="left:1033px;top:221.92px;font-size:19px;color:#000;">frame</div>
<div class="t" style="left:1137px;top:221.92px;font-size:19px;color:#000;">QFrame</div>
<div class="t" style="left:991px;top:247.92px;font-size:19px;color:#000;">menubar</div>
<div class="t" style="left:1137px;top:247.92px;font-size:19px;color:#000;">QMenuBar</div>
<div class="t" style="left:991px;top:273.92px;font-size:19px;color:#000;">statusbar</div>
<div class="t" style="left:1137px;top:273.92px;font-size:19px;color:#000;">QStatusBar</div>
<div class="a" style="left:948px;top:373px;width:485px;height:25px;background:#414243;"></div>
<div class="a" style="left:950px;top:375px;width:413px;height:22px;background:#fff;"></div>
<div class="t mono" style="left:952px;top:380.52px;font-size:15px;color:#9a9a9a;">Filter</div>
<svg class="a" style="left:1366px;top:379px;" width="17" height="15" viewBox="0 0 17 15"><path d="M5 0 H9 V5 H14 V9 H9 V14 H5 V9 H0 V5 H5 Z" fill="#3ccc2c"/><path d="M11 11 H17 L14 14 Z" fill="#ddd"/></svg>
<div class="a" style="left:1390px;top:383px;width:14px;height:5px;background:#d8d8d8;"></div>
<svg class="a" style="left:1412px;top:378px;" width="17" height="17" viewBox="0 0 17 17"><path d="M1 15 L9 7" stroke="#ccc" stroke-width="2.5" stroke-linecap="round"/><path d="M8 5 A4 4 0 0 1 13 0 L11 3 L13 4 L15 2 A4 4 0 0 1 10 8 Z" fill="#ccc"/><path d="M12 12 H17 L14.5 15 Z" fill="#ddd"/></svg>
<div class="a" style="left:948px;top:398px;width:459px;height:22px;background:#f0f0f0;"></div>
<div class="a" style="left:948px;top:419px;width:485px;height:1px;background:#b8b8b8;"></div>
<div class="t mono" style="left:951px;top:403.02px;font-size:15px;color:#000;">frame : QFrame</div>
<div class="a" style="left:948px;top:420px;width:459px;height:36px;background:#fff;"></div>
<div class="a" style="left:1097px;top:420px;width:1px;height:36px;background:#e8e8e8;"></div>
<div class="a" style="left:1406px;top:420px;width:1px;height:36px;background:#e4e4e4;"></div>
<div class="t" style="left:954px;top:430.26px;font-size:18px;color:#000;">属性</div>
<div class="t" style="left:1103px;top:430.26px;font-size:18px;color:#000;">值</div>
<div class="a" style="left:948px;top:456px;width:459px;height:27px;background:#ffffbf;"></div>
<div class="a" style="left:948px;top:456px;width:20px;height:27px;background:#ffffbf;"></div>
<div class="a" style="left:948px;top:482px;width:459px;height:1px;background:#dcdcdc;"></div>
<div class="a" style="left:1097px;top:456px;width:1px;height:27px;background:#dcdcdc;"></div>
<svg class="a" style="left:955px;top:464px;" width="7" height="12" viewBox="0 0 7 12"><path d="M0.5 0.5 L6 6 L0.5 11.5" stroke="#555" stroke-width="1.2" fill="none"/></svg>
<div class="t" style="left:971px;top:460.42px;font-size:19px;color:#000;">statusTip</div>
<div class="a" style="left:948px;top:483px;width:459px;height:27px;background:#ffffdf;"></div>
<div class="a" style="left:948px;top:483px;width:20px;height:27px;background:#ffffbf;"></div>
<div class="a" style="left:948px;top:509px;width:459px;height:1px;background:#dcdcdc;"></div>
<div class="a" style="left:1097px;top:483px;width:1px;height:27px;background:#dcdcdc;"></div>
<svg class="a" style="left:955px;top:491px;" width="7" height="12" viewBox="0 0 7 12"><path d="M0.5 0.5 L6 6 L0.5 11.5" stroke="#555" stroke-width="1.2" fill="none"/></svg>
<div class="t" style="left:971px;top:487.42px;font-size:19px;color:#000;">whatsThis</div>
<div class="a" style="left:948px;top:510px;width:459px;height:27px;background:#ffffbf;"></div>
<div class="a" style="left:948px;top:510px;width:20px;height:27px;background:#ffffbf;"></div>
<div class="a" style="left:948px;top:536px;width:459px;height:1px;background:#dcdcdc;"></div>
<div class="a" style="left:1097px;top:510px;width:1px;height:27px;background:#dcdcdc;"></div>
<svg class="a" style="left:955px;top:518px;" width="7" height="12" viewBox="0 0 7 12"><path d="M0.5 0.5 L6 6 L0.5 11.5" stroke="#555" stroke-width="1.2" fill="none"/></svg>
<div class="t" style="left:971px;top:514.42px;font-size:19px;color:#000;">accessibleN...</div>
<div class="a" style="left:948px;top:537px;width:459px;height:27px;background:#ffffdf;"></div>
<div class="a" style="left:948px;top:537px;width:20px;height:27px;background:#ffffbf;"></div>
<div class="a" style="left:948px;top:563px;width:459px;height:1px;background:#dcdcdc;"></div>
<div class="a" style="left:1097px;top:537px;width:1px;height:27px;background:#dcdcdc;"></div>
<svg class="a" style="left:955px;top:545px;" width="7" height="12" viewBox="0 0 7 12"><path d="M0.5 0.5 L6 6 L0.5 11.5" stroke="#555" stroke-width="1.2" fill="none"/></svg>
<div class="t" style="left:971px;top:541.42px;font-size:19px;color:#000;">accessibleD...</div>
<div class="a" style="left:948px;top:564px;width:459px;height:27px;background:#ffffbf;"></div>
<div class="a" style="left:948px;top:564px;width:20px;height:27px;background:#ffffbf;"></div>
<div class="a" style="left:948px;top:590px;width:459px;height:1px;background:#dcdcdc;"></div>
<div class="a" style="left:1097px;top:564px;width:1px;height:27px;background:#dcdcdc;"></div>
<div class="t" style="left:971px;top:568.42px;font-size:19px;color:#000;">layoutDirect...</div>
<div class="t" style="left:1101px;top:568.42px;font-size:19px;color:#000;">LeftToRight</div>
<div class="a" style="left:948px;top:591px;width:459px;height:27px;background:#ffffdf;"></div>
<div class="a" style="left:948px;top:591px;width:20px;height:27px;background:#ffffbf;"></div>
<div class="a" style="left:948px;top:617px;width:459px;height:1px;background:#dcdcdc;"></div>
<div class="a" style="left:1097px;top:591px;width:1px;height:27px;background:#dcdcdc;"></div>
<div class="t" style="left:971px;top:595.42px;font-size:19px;color:#000;">autoFillBack...</div>
<div class="a" style="left:1101px;top:596px;width:18px;height:19px;border:1px solid #444;border-radius:3px;background:#f2f2f2"></div>
<div class="a" style="left:948px;top:618px;width:459px;height:27px;background:#ffffbf;"></div>
<div class="a" style="left:948px;top:618px;width:20px;height:27px;background:#ffffbf;"></div>
<div class="a" style="left:948px;top:644px;width:459px;height:1px;background:#dcdcdc;"></div>
<div class="a" style="left:1097px;top:618px;width:1px;height:27px;background:#dcdcdc;"></div>
<div class="t" style="left:971px;top:622.42px;font-size:19px;color:#000;">styleSheet</div>
<div class="a" style="left:948px;top:645px;width:459px;height:27px;background:#ffffdf;"></div>
<div class="a" style="left:948px;top:645px;width:20px;height:27px;background:#ffffbf;"></div>
<div class="a" style="left:948px;top:671px;width:459px;height:1px;background:#dcdcdc;"></div>
<div class="a" style="left:1097px;top:645px;width:1px;height:27px;background:#dcdcdc;"></div>
<svg class="a" style="left:955px;top:653px;" width="7" height="12" viewBox="0 0 7 12"><path d="M0.5 0.5 L6 6 L0.5 11.5" stroke="#555" stroke-width="1.2" fill="none"/></svg>
<div class="t" style="left:971px;top:649.42px;font-size:19px;color:#000;">locale</div>
<div class="t" style="left:1101px;top:649.42px;font-size:19px;color:#000;">Chinese, China</div>
<div class="a" style="left:948px;top:672px;width:459px;height:27px;background:#ffffbf;"></div>
<div class="a" style="left:948px;top:672px;width:20px;height:27px;background:#ffffbf;"></div>
<div class="a" style="left:948px;top:698px;width:459px;height:1px;background:#dcdcdc;"></div>
<div class="a" style="left:1097px;top:672px;width:1px;height:27px;background:#dcdcdc;"></div>
<svg class="a" style="left:955px;top:680px;" width="7" height="12" viewBox="0 0 7 12"><path d="M0.5 0.5 L6 6 L0.5 11.5" stroke="#555" stroke-width="1.2" fill="none"/></svg>
<div class="t" style="left:971px;top:676.42px;font-size:19px;color:#000;">inputMetho...</div>
<div class="t" style="left:1101px;top:676.42px;font-size:19px;color:#000;">ImhNone</div>
<div class="a" style="left:948px;top:699px;width:459px;height:26px;background:#a0a0a0;"></div>
<svg class="a" style="left:953px;top:707px;" width="12" height="7" viewBox="0 0 12 7"><path d="M0.5 0.5 L6 6 L11.5 0.5" stroke="#222" stroke-width="1.3" fill="none"/></svg>
<div class="t" style="left:971px;top:703.42px;font-size:19px;color:#fff;font-weight:bold;">QFrame</div>
<div class="a" style="left:948px;top:725px;width:459px;height:27px;background:#bfffbf;"></div>
<div class="a" style="left:948px;top:725px;width:20px;height:27px;background:#bfffbf;"></div>
<div class="a" style="left:948px;top:751px;width:459px;height:1px;background:#dcdcdc;"></div>
<div class="a" style="left:1097px;top:725px;width:1px;height:27px;background:#dcdcdc;"></div>
<div class="t" style="left:971px;top:729.42px;font-size:19px;color:#000;font-weight:bold;">frameShape</div>
<div class="t" style="left:1101px;top:729.42px;font-size:19px;color:#000;">Box</div>
<div class="a" style="left:948px;top:752px;width:459px;height:27px;background:#dfffdf;"></div>
<div class="a" style="left:948px;top:752px;width:20px;height:27px;background:#bfffbf;"></div>
<div class="a" style="left:948px;top:778px;width:459px;height:1px;background:#dcdcdc;"></div>
<div class="a" style="left:1097px;top:752px;width:1px;height:27px;background:#dcdcdc;"></div>
<div class="t" style="left:971px;top:756.42px;font-size:19px;color:#000;font-weight:bold;">frameShad...</div>
<div class="t" style="left:1101px;top:756.42px;font-size:19px;color:#000;">Sunken</div>
<div class="a" style="left:948px;top:779px;width:459px;height:27px;background:#bfffbf;"></div>
<div class="a" style="left:948px;top:779px;width:20px;height:27px;background:#bfffbf;"></div>
<div class="a" style="left:948px;top:805px;width:459px;height:1px;background:#dcdcdc;"></div>
<div class="a" style="left:1097px;top:779px;width:1px;height:27px;background:#dcdcdc;"></div>
<div class="t" style="left:971px;top:783.42px;font-size:19px;color:#000;font-weight:bold;">lineWidth</div>
<div class="t" style="left:1101px;top:783.42px;font-size:19px;color:#000;">5</div>
<div class="a" style="left:948px;top:806px;width:459px;height:27px;background:#dfffdf;"></div>
<div class="a" style="left:948px;top:806px;width:20px;height:27px;background:#bfffbf;"></div>
<div class="a" style="left:948px;top:832px;width:459px;height:1px;background:#dcdcdc;"></div>
<div class="a" style="left:1097px;top:806px;width:1px;height:27px;background:#dcdcdc;"></div>
<div class="a" style="left:968px;top:806px;width:129px;height:27px;background:#f0f0f0;"></div>
<div class="a" style="left:1098px;top:806px;width:309px;height:27px;background:#fff;"></div>
<div class="a" style="left:1098px;top:831px;width:275px;height:2px;background:#a8a8a8;"></div>
<div class="t" style="left:971px;top:810.42px;font-size:19px;color:#000;font-weight:bold;">midLineWi...</div>
<div class="t" style="left:1101px;top:810.42px;font-size:19px;color:#000;">10</div>
<div class="a" style="left:1373px;top:809px;width:17px;height:21px;background:#e8e8e8;border:1px solid #aaa"></div>
<svg class="a" style="left:1375px;top:811px;" width="13" height="17" viewBox="0 0 13 17"><path d="M1 7 L6.5 1 L12 7 Z" fill="#000"/><path d="M1 10 L6.5 16 L12 10 Z" fill="#000"/></svg>
<div class="a" style="left:1393px;top:808px;width:12px;height:23px;background:#fff;border:1px solid #ccc;border-radius:4px"></div>
<svg class="a" style="left:1395px;top:815px;" width="8" height="8" viewBox="0 0 8 8"><path d="M2 3 H5 A2.5 2.5 0 0 1 5 8 H3" stroke="#b01010" stroke-width="1.3" fill="none"/><path d="M0 3 L3 0 V6 Z" fill="#b01010"/></svg>
<div class="a" style="left:1098px;top:833px;width:309px;height:1px;background:#f0f0f0;"></div>
<div class="a" style="left:1415px;top:664px;width:11px;height:150px;background:#858585;"></div>
<div class="a" style="left:73px;top:841px;width:1360px;height:25px;background:#414243;border-radius:0 0 8px 0"></div>
<div class="a" style="left:73px;top:841px;width:1360px;height:1px;background:#2a2a2a;"></div>
<div class="a" style="left:72px;top:100px;width:1px;height:766px;background:#2e2f30;"></div>
<div class="a" style="left:80px;top:848px;width:12px;height:12px;border:1px solid #888;border-left-width:4px"></div>
<div class="a" style="left:104px;top:845px;width:200px;height:20px;background:#fff;"></div>
<svg class="a" style="left:110px;top:848px;" width="16" height="14" viewBox="0 0 16 14"><circle cx="9" cy="5.5" r="4.5" stroke="#555" stroke-width="1.3" fill="none"/><path d="M6 9 L1 14" stroke="#555" stroke-width="1.5"/><path d="M10 12 H14 L12 14 Z" fill="#555"/></svg>
<div class="t" style="left:131px;top:845.92px;font-size:19px;color:#8a8a8a;">Type to locate ...</div>
<div class="a" style="left:307px;top:843px;width:2px;height:22px;background:#2e2e2e;"></div>
<div class="t mono" style="left:316px;top:849.52px;font-size:15px;color:#e2e2e2;">1 <span style="letter-spacing:2.5px">问题</span></div>
<div class="t mono" style="left:383px;top:849.52px;font-size:15px;color:#e2e2e2;">2 Search Results</div>
<div class="t mono" style="left:540px;top:849.52px;font-size:15px;color:#e2e2e2;">3 <span style="letter-spacing:2.5px">应用程序输出</span></div>
<div class="t mono" style="left:679px;top:849.52px;font-size:15px;color:#e2e2e2;">4 <span style="letter-spacing:2.5px">编译输出</span></div>
<div class="t mono" style="left:782px;top:849.52px;font-size:15px;color:#e2e2e2;">5 QML Debugger Console</div>
<div class="t mono" style="left:993px;top:849.52px;font-size:15px;color:#e2e2e2;">6 <span style="letter-spacing:2.5px">概要信息</span></div>
<div class="t mono" style="left:1096px;top:849.52px;font-size:15px;color:#e2e2e2;">8 Test Results</div>
<svg class="a" style="left:1237px;top:849px;" width="8" height="13" viewBox="0 0 8 13"><path d="M0 5 L4 0 L8 5 Z M0 8 L4 13 L8 8 Z" fill="#ccc"/></svg>
<div class="a" style="left:1361px;top:857px;width:22px;height:9px;background:#2a2a2a;"></div>
<div class="a" style="left:1396px;top:857px;width:11px;height:9px;background:#4a4a4a;"></div>
<div class="t" style="left:1256px;top:842.46px;font-size:16px;color:rgba(225,225,225,0.9);">CSDN @Courage2022</div>
</body></html>
